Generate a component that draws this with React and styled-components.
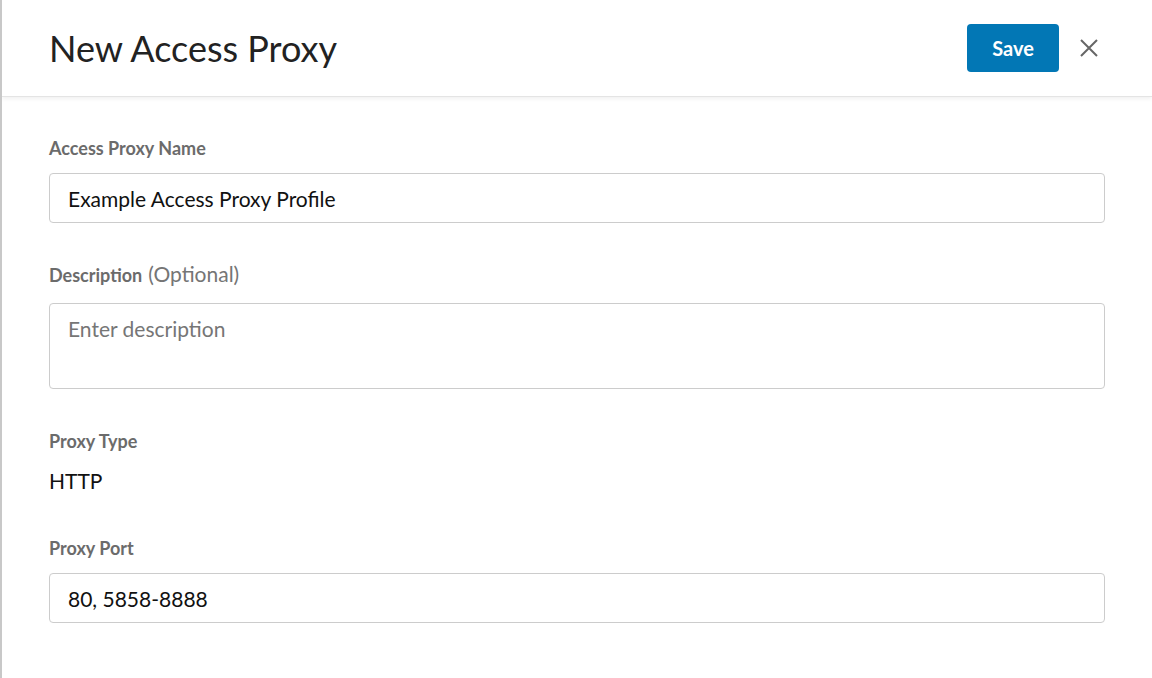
import React from "react";
import styled, { createGlobalStyle } from "styled-components";

const GlobalStyle = createGlobalStyle`
  html, body {
    margin: 0;
    padding: 0;
    background: #ffffff;
    font-family: Lato, "Open Sans", Arial, sans-serif;
  }
  * { box-sizing: border-box; }
`;

const Panel = styled.div`
  width: 1152px;
  height: 678px;
  background: #ffffff;
  border-left: 2px solid #c8c8c8;
  display: flex;
  flex-direction: column;
  overflow: hidden;
`;

const Header = styled.header`
  height: 97px;
  flex: none;
  display: flex;
  align-items: center;
  justify-content: space-between;
  padding: 0 47px 0 47px;
  border-bottom: 1px solid #e4e4e4;
  box-shadow: 0 2px 4px rgba(0, 0, 0, 0.06);
  position: relative;
  z-index: 1;
`;

const Title = styled.h1`
  margin: 0;
  font-size: 36px;
  font-weight: 400;
  color: #222222;
`;

const Actions = styled.div`
  display: flex;
  align-items: center;
  gap: 14px;
`;

const SaveButton = styled.button`
  width: 92px;
  height: 48px;
  border: none;
  border-radius: 4px;
  background: #0277b5;
  color: #ffffff;
  font-family: Lato, Arial, sans-serif;
  font-size: 20px;
  font-weight: 700;
  cursor: pointer;
`;

const CloseButton = styled.button`
  width: 32px;
  height: 32px;
  border: none;
  background: transparent;
  padding: 0;
  display: flex;
  align-items: center;
  justify-content: center;
  cursor: pointer;
`;

const Form = styled.div`
  display: flex;
  flex-direction: column;
  gap: 40px;
  padding: 40px 47px 0 47px;
`;

const Field = styled.div`
  display: flex;
  flex-direction: column;
  margin-bottom: ${(p) => p.$after || 0}px;
`;

const Label = styled.label`
  font-size: 18px;
  line-height: 22px;
  font-weight: 700;
  color: #6b6b6b;
  margin-bottom: ${(p) => p.$gap || 14}px;
`;

const Optional = styled.span`
  font-size: 21px;
  line-height: 22px;
  font-weight: 400;
  color: #757575;
  margin-left: 6px;
`;

const Input = styled.input`
  height: 50px;
  width: 100%;
  border: 1px solid #cccccc;
  border-radius: 4px;
  padding: 0 18px;
  font-family: Lato, Arial, sans-serif;
  font-size: 21px;
  font-variant-numeric: tabular-nums;
  color: #111111;
  outline: none;
  background: #fff;
`;

const TextArea = styled.textarea`
  height: 86px;
  width: 100%;
  border: 1px solid #cccccc;
  border-radius: 4px;
  padding: 13px 18px;
  font-family: Lato, Arial, sans-serif;
  font-size: 21px;
  line-height: 24px;
  color: #111111;
  resize: none;
  outline: none;
  &::placeholder {
    color: #767676;
  }
`;

const Value = styled.div`
  font-size: 21px;
  line-height: 24px;
  color: #111111;
  padding-bottom: 4px;
`;

export default function App() {
  return (
    <>
      <GlobalStyle />
      <Panel>
        <Header>
          <Title>New Access Proxy</Title>
          <Actions>
            <SaveButton>Save</SaveButton>
            <CloseButton aria-label="Close">
              <svg width="18" height="18" viewBox="0 0 18 18">
                <path d="M1 1 L17 17 M17 1 L1 17" stroke="#666666" strokeWidth="2" fill="none" />
              </svg>
            </CloseButton>
          </Actions>
        </Header>
        <Form>
          <Field>
            <Label>Access Proxy Name</Label>
            <Input defaultValue="Example Access Proxy Profile" />
          </Field>
          <Field $after={1}>
            <Label $gap={17}>
              Description<Optional>(Optional)</Optional>
            </Label>
            <TextArea placeholder="Enter description" />
          </Field>
          <Field>
            <Label $gap={17}>Proxy Type</Label>
            <Value>HTTP</Value>
          </Field>
          <Field>
            <Label>Proxy Port</Label>
            <Input defaultValue="80, 5858-8888" />
          </Field>
        </Form>
      </Panel>
    </>
  );
}
